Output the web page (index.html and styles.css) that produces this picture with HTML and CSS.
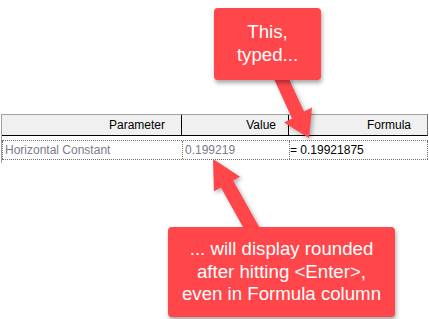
FILE: index.html
```html
<!DOCTYPE html>
<html>
<head>
<meta charset="utf-8">
<link rel="stylesheet" href="styles.css">
</head>
<body>
<div class="sheet">
  <div class="grid">
    <div class="head">
      <div class="hc c1">Parameter</div>
      <div class="hc c2">Value</div>
      <div class="hc c3">Formula</div>
    </div>
    <div class="gap"></div>
    <div class="row">
      <div class="rc c1 dim">Horizontal Constant</div>
      <div class="rc c2 dim">0.199219</div>
      <div class="rc c3">= 0.19921875</div>
    </div>
    <div class="tail"></div>
  </div>
  <svg class="arrows" width="429" height="319" viewBox="0 0 429 319">
    <polygon points="270,70 292,118.5 284,122.5 309,138 312,107.5 304,111.5 282,64"/>
    <polygon points="213,159 240,176.7 233.1,180.6 261.1,230.6 248.9,237.4 220.9,187.4 213.9,191.3"/>
  </svg>
  <div class="callout top">This,<br>typed...</div>
  <div class="callout bottom">... will display rounded<br>after hitting &lt;Enter&gt;,<br>even in Formula column</div>
</div>
</body>
</html>
```
FILE: styles.css
```css
html, body {
  margin: 0;
  padding: 0;
  background: #ffffff;
}
.sheet {
  position: relative;
  width: 429px;
  height: 319px;
  overflow: hidden;
  font-family: "Liberation Sans", Arial, sans-serif;
}
.grid {
  margin-top: 114px;
  margin-left: 1px;
  width: 427px;
  box-sizing: border-box;
  border-left: 1px solid #a0a0a0;
}
.head {
  display: grid;
  grid-template-columns: 180px 107px 1fr;
  height: 22px;
  box-sizing: border-box;
  border-top: 1px solid #a0a0a0;
  border-right: 1px solid #707070;
  border-bottom: 1px solid #000000;
  background: #f0f0f0;
}
.hc {
  font-size: 12px;
  line-height: 20px;
  color: #000;
  text-align: right;
  box-sizing: border-box;
}
.hc.c1 { border-right: 1px solid #000; padding-right: 16px; }
.hc.c2 { border-right: 1px solid #000; padding-right: 12px; }
.hc.c3 { padding-right: 16px; }
.gap { height: 4px; }
.row {
  display: grid;
  grid-template-columns: 180px 107px 1fr;
  height: 20px;
  box-sizing: border-box;
  border-top: 1px dotted #707070;
  border-bottom: 1px dotted #707070;
}
.rc {
  font-size: 12px;
  line-height: 18px;
  color: #000;
  white-space: nowrap;
  box-sizing: border-box;
}
.rc.c1 { border-left: 1px dotted #707070; padding-left: 2px; }
.rc.c2 { border-left: 1px dotted #707070; padding-left: 2px; }
.rc.c3 { border-left: 1px dotted #707070; border-right: 1px dotted #707070; padding-left: 0; }
.dim { color: #7a7a88; }
.tail { height: 3px; }
.arrows {
  position: absolute;
  left: 0;
  top: 0;
  fill: #ff464a;
  filter: drop-shadow(2px 2px 2px rgba(0,0,0,0.3));
}
.callout {
  position: absolute;
  background: #ff464a;
  color: #ffffff;
  border-radius: 4px;
  box-shadow: 1px 3px 4px rgba(0,0,0,0.35);
  font-size: 18.67px;
  line-height: 22.5px;
  text-align: center;
  box-sizing: border-box;
}
.callout.top {
  left: 214px;
  top: 8px;
  width: 107px;
  height: 72px;
  padding-top: 13px;
}
.callout.bottom {
  left: 168px;
  top: 227px;
  width: 227px;
  height: 90px;
  padding-top: 11px;
}
```
